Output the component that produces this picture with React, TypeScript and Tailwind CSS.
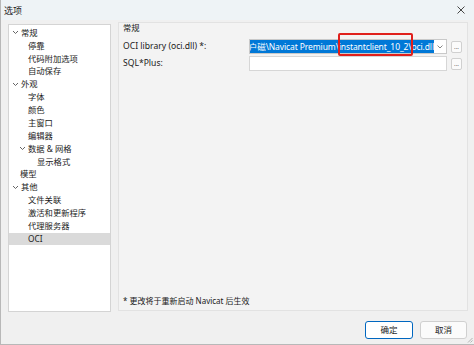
import React from "react";

const FONT = { fontFamily: '"Noto Sans", "Noto Sans CJK SC", sans-serif' };

function Chevron() {
  return (
    <svg width="7" height="5" viewBox="0 0 7 5" className="shrink-0">
      <path d="M1 1 L3.5 3.5 L6 1" fill="none" stroke="#555" strokeWidth="0.9" />
    </svg>
  );
}

type Item = { label: string; pad: number; chevron?: boolean; selected?: boolean };

const items: Item[] = [
  { label: "常规", pad: 3, chevron: true },
  { label: "停靠", pad: 20 },
  { label: "代码附加选项", pad: 20 },
  { label: "自动保存", pad: 20 },
  { label: "外观", pad: 3, chevron: true },
  { label: "字体", pad: 20 },
  { label: "颜色", pad: 20 },
  { label: "主窗口", pad: 20 },
  { label: "编辑器", pad: 20 },
  { label: "数据 & 网格", pad: 10, chevron: true },
  { label: "显示格式", pad: 29 },
  { label: "模型", pad: 12 },
  { label: "其他", pad: 3, chevron: true },
  { label: "文件关联", pad: 20 },
  { label: "激活和更新程序", pad: 20 },
  { label: "代理服务器", pad: 20 },
  { label: "OCI", pad: 20, selected: true },
];

function DotsButton() {
  return (
    <div className="ml-[4px] w-[11px] h-[12px] bg-[#fbfbfb] border border-[#d0d0d0] rounded-[2px] flex items-end justify-center pb-[2px]">
      <span className="text-[6px] leading-none text-[#444]">...</span>
    </div>
  );
}

export default function App() {
  return (
    <div
      className="w-[474px] h-[345px] bg-[#f0f0f0] text-[9px] text-[#1a1a1a] flex flex-col overflow-hidden border-l border-b border-[#b8b8b8] relative"
      style={FONT}
    >
      {/* Title bar */}
      <div className="h-[20px] bg-[#eef3f6] flex items-center justify-between pl-[3px] pr-[9px] shrink-0">
        <span className="text-[9px] leading-none">选项</span>
        <svg width="8" height="8" viewBox="0 0 8 8">
          <path d="M0.5 0.5 L7.5 7.5 M7.5 0.5 L0.5 7.5" stroke="#333" strokeWidth="0.9" />
        </svg>
      </div>

      {/* Body */}
      <div className="flex items-start pl-[7px] pt-[4px] gap-[7px]">
        {/* Tree */}
        <div className="w-[103px] h-[288px] bg-white border border-[#d4d4d4] pt-[1.5px] shrink-0 text-[8.3px]">
          {items.map((it) => (
            <div
              key={it.label}
              className={`h-[12.875px] flex items-center leading-none ${it.selected ? "bg-[#dadada]" : ""}`}
              style={{ paddingLeft: it.pad }}
            >
              {it.chevron ? (
                <>
                  <Chevron />
                  <span className="ml-[2px]">{it.label}</span>
                </>
              ) : (
                <span className="ml-[-1px]">{it.label}</span>
              )}
            </div>
          ))}
        </div>

        {/* Group box */}
        <div className="w-[350px] h-[289px] mt-[-2px] bg-[#f3f3f3] border border-[#e2e2e2] flex flex-col pl-[4px]">
          <div className="h-[8px] leading-[8px] text-[8.3px] mt-[1px]">常规</div>
          <div className="flex items-center mt-[7px] h-[15px]">
            <div className="w-[126px] leading-none text-[8.6px]">OCI library (oci.dll) *:</div>
            <div className="relative w-[198px] h-[15px]">
              <div className="w-full h-full bg-white border border-[#c9c9c9] flex items-center overflow-hidden">
                <div className="flex-1 flex justify-end overflow-hidden h-full items-center">
                  <span className="bg-[#0078d7] text-white whitespace-nowrap leading-[13px] h-[13px] text-[8.5px] tracking-[-0.1px]">
                    户磁\Navicat Premium\instantclient_10_2\oci.dll
                  </span>
                </div>
                <div className="w-[12px] h-full flex items-center justify-center shrink-0">
                  <svg width="6" height="4" viewBox="0 0 6 4">
                    <path d="M0.5 0.5 L3 3 L5.5 0.5" fill="none" stroke="#666" strokeWidth="0.8" />
                  </svg>
                </div>
              </div>
              <div className="absolute left-[89px] top-[-6px] w-[75px] h-[23px] border-2 border-[#e0201c] rounded-[2px]" />
            </div>
            <DotsButton />
          </div>
          <div className="flex items-center mt-[2px] h-[15px]">
            <div className="w-[126px] leading-none text-[8.6px]">SQL*Plus:</div>
            <div className="w-[198px] h-[15px] bg-white border border-[#d6d6d6]" />
            <DotsButton />
          </div>
          <div className="flex-1" />
          <div className="leading-none mb-[5px] text-[8px]">* 更改将于重新启动 Navicat 后生效</div>
        </div>
      </div>

      {/* Footer */}
      <div className="flex justify-end gap-[7px] pr-[7px] mt-[9px]">
        <button className="w-[48px] h-[18px] bg-white border border-[#0067c0] rounded-[3px] text-[8.5px] leading-none">
          确定
        </button>
        <button className="w-[47px] h-[18px] bg-[#fbfbfb] border border-[#d0d0d0] rounded-[3px] text-[8.5px] leading-none">
          取消
        </button>
      </div>

      {/* resize grip */}
      <svg className="absolute right-[1px] bottom-[1px]" width="6" height="6" viewBox="0 0 6 6">
        <path d="M5.5 1 L1 5.5 M5.5 3.5 L3.5 5.5" stroke="#999" strokeWidth="0.7" />
      </svg>
    </div>
  );
}
